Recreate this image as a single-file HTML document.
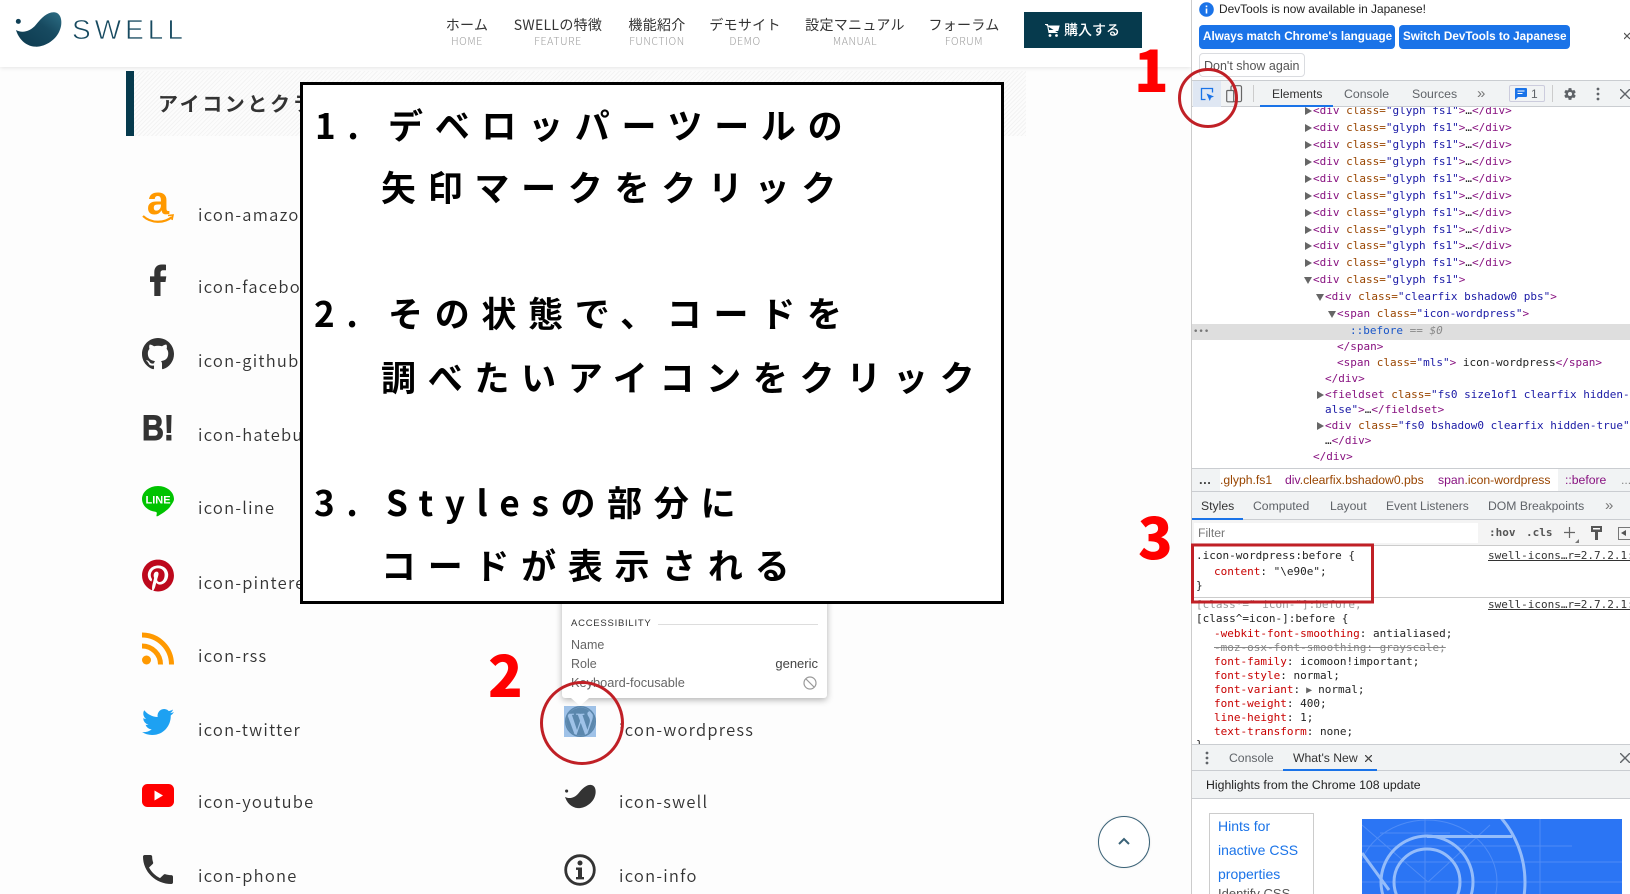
<!DOCTYPE html>
<html lang="ja"><head><meta charset="utf-8"><title>SWELL</title>
<style>
html,body{margin:0;padding:0;width:1630px;height:894px;overflow:hidden;background:#fdfdfd}
body{position:relative;font-family:"Liberation Sans","Noto Sans CJK JP",sans-serif;color:#333}
.a{position:absolute}
.t{position:absolute;white-space:nowrap;line-height:16px}
.j{font-family:"Noto Sans CJK JP","Liberation Sans",sans-serif}
.n1{position:absolute;white-space:nowrap;transform:translateX(-50%);font-family:"Noto Sans CJK JP",sans-serif;font-size:14px;line-height:16px;top:17px;color:#333;font-weight:400;letter-spacing:.3px}
.n2{position:absolute;white-space:nowrap;transform:translateX(-50%);font-family:"Noto Sans CJK JP",sans-serif;font-size:10.5px;line-height:12px;top:36px;color:#a0a0a0;letter-spacing:.6px;font-weight:300}
.ic{position:absolute;white-space:nowrap;font-family:"Noto Sans CJK JP",sans-serif;font-size:16.5px;line-height:24px;letter-spacing:1.25px;color:#333;font-weight:350}
.big{position:absolute;white-space:nowrap;font-family:"Noto Sans CJK JP",sans-serif;font-weight:700;font-size:35px;letter-spacing:11.7px;line-height:50px;color:#000}
.red{position:absolute;font-family:"Noto Sans CJK JP",sans-serif;font-weight:900;font-size:57px;line-height:62px;color:#f00}
.m{position:absolute;white-space:nowrap;font-family:"DejaVu Sans Mono",monospace;font-size:11px;line-height:14px;color:#222}
.p{color:#881280}.o{color:#994500}.v{color:#1a1aa6}.r{color:#c80000}
.u{position:absolute;white-space:nowrap;font-size:12px;line-height:16px;color:#555}
.tri{position:absolute;width:0;height:0;border-left:7px solid #666;border-top:4px solid transparent;border-bottom:4px solid transparent}
.trd{position:absolute;width:0;height:0;border-top:7px solid #666;border-left:4px solid transparent;border-right:4px solid transparent}
</style></head><body>

<!-- page header -->
<div class="a" style="left:0;top:0;width:1191px;height:67px;background:#fff;box-shadow:0 1px 4px rgba(0,0,0,.1)"></div>
<svg class="a" style="left:10px;top:8px" width="50" height="48" viewBox="0 0 150 144" overflow="visible"><defs><linearGradient id="lg" x1="0" y1="1" x2="1" y2="0"><stop offset="0" stop-color="#0c394e"/><stop offset=".6" stop-color="#174a60"/><stop offset="1" stop-color="#2e6f86"/></linearGradient></defs><circle cx="25" cy="40" r="7.5" fill="#0f3f55"/><path d="M18 66C35 76 60 72 78 50C95 28 115 10 135 13C155 16 158 45 150 65C140 95 105 118 75 116C45 114 25 90 18 66Z" fill="url(#lg)"/></svg>
<div class="t" style="left:72px;top:14px;font-size:28px;line-height:32px;letter-spacing:4px;color:#174a60;-webkit-text-stroke:.7px #fff">SWELL</div>

<div class="n1" style="left:467px">ホーム</div><div class="n2" style="left:467px">HOME</div>
<div class="n1" style="left:558px">SWELLの特徴</div><div class="n2" style="left:558px">FEATURE</div>
<div class="n1" style="left:657px">機能紹介</div><div class="n2" style="left:657px">FUNCTION</div>
<div class="n1" style="left:745px">デモサイト</div><div class="n2" style="left:745px">DEMO</div>
<div class="n1" style="left:855px">設定マニュアル</div><div class="n2" style="left:855px">MANUAL</div>
<div class="n1" style="left:964px">フォーラム</div><div class="n2" style="left:964px">FORUM</div>

<div class="a" style="left:1024px;top:12px;width:118px;height:36px;background:#063a4d"></div>
<svg class="a" style="left:1045px;top:23px" width="15" height="15" viewBox="0 0 15 15"><path d="M0 1.5h2.5l1.5 8h8.500M3 3h11l-1.200 4.500H4" fill="#fff" stroke="#fff" stroke-width="1.100"/><circle cx="5" cy="12.500" r="1.400" fill="#fff"/><circle cx="11.500" cy="12.500" r="1.400" fill="#fff"/></svg>
<div class="t j" style="left:1064px;top:22px;font-size:14px;color:#fff;font-weight:500">購入する</div>

<!-- section title -->
<div class="a" style="left:134px;top:71px;width:892px;height:65px;background:repeating-linear-gradient(-45deg,#f3f3f3 0,#f3f3f3 1px,#fcfcfc 1px,#fcfcfc 3px)"></div>
<div class="a" style="left:126px;top:71px;width:8px;height:65px;background:#063a4d"></div>
<div class="t j" style="left:158px;top:90px;font-size:20px;line-height:26px;font-weight:700;letter-spacing:2.6px;color:#333">アイコンとクラス</div>

<!-- icons left -->
<svg class="a" style="left:142px;top:192px" width="32" height="32" viewBox="0 0 32 32"><text x="16" y="22" text-anchor="middle" font-family="Liberation Sans" font-weight="700" font-size="40" fill="#f90">a</text><path d="M1 24C9 31.500 22 31.500 30 25" fill="none" stroke="#f90" stroke-width="2.200"/><path d="M26 23.500l5-.5-1 5" fill="none" stroke="#f90" stroke-width="1.600"/></svg>
<div class="ic" style="left:198px;top:202px">icon-amazon</div>

<svg class="a" style="left:142px;top:264px" width="32" height="32" viewBox="0 0 32 32"><path d="M18.500 32V18h5l.8-5.600h-5.800V9c0-1.600.5-2.800 2.900-2.800H24V.7C23.400.6 21.700.5 19.800.5 15.300.5 12.300 3.200 12.300 8.200v4.200H8V18h4.300v14z" fill="#333"/></svg>
<div class="ic" style="left:198px;top:274px">icon-facebook</div>

<svg class="a" style="left:142px;top:338px" width="32" height="32" viewBox="0 0 16 16"><path fill="#333" d="M8 0C3.580 0 0 3.580 0 8c0 3.540 2.290 6.530 5.470 7.590.4.070.55-.17.55-.38 0-.19-.01-.82-.01-1.490-2.010.37-2.530-.49-2.690-.94-.09-.23-.48-.94-.82-1.130-.28-.15-.68-.52-.01-.53.63-.01 1.080.58 1.230.82.72 1.210 1.870.87 2.330.66.07-.52.28-.87.51-1.070-1.780-.2-3.640-.89-3.640-3.950 0-.87.31-1.590.82-2.150-.08-.2-.36-1.020.08-2.120 0 0 .67-.21 2.200.82.64-.18 1.320-.27 2-.27.68 0 1.360.09 2 .27 1.530-1.040 2.200-.82 2.200-.82.44 1.100.16 1.920.08 2.120.51.56.82 1.270.82 2.150 0 3.070-1.870 3.750-3.650 3.950.29.25.54.73.54 1.480 0 1.070-.01 1.930-.01 2.200 0 .21.15.46.55.38A8.013 8.013 0 0016 8c0-4.420-3.580-8-8-8z"/></svg>
<div class="ic" style="left:198px;top:348px">icon-github</div>

<svg class="a" style="left:142px;top:414px" width="32" height="30"><text x="0" y="26" font-family="Liberation Sans" font-weight="700" font-size="35" fill="#333" stroke="#333" stroke-width="1" textLength="32" lengthAdjust="spacingAndGlyphs">B!</text></svg>
<div class="ic" style="left:198px;top:422px">icon-hatebu</div>

<svg class="a" style="left:142px;top:486px" width="32" height="32" viewBox="0 0 32 32"><path d="M16 0C7.200 0 0 5.800 0 13c0 6.400 5.700 11.800 13.300 12.800.5.100 1.200.3 1.400.8.200.4.100 1 0 1.400l-.2 1.300c-.1.4-.3 1.500 1.300.8s8.700-5.100 11.900-8.800C29.800 18 32 15.600 32 13 32 5.800 24.800 0 16 0z" fill="#00c300"/><text x="16" y="17.500" text-anchor="middle" font-family="Liberation Sans" font-weight="700" font-size="11" fill="#fff">LINE</text></svg>
<div class="ic" style="left:198px;top:495px">icon-line</div>

<svg class="a" style="left:142px;top:559px" width="32" height="33" viewBox="0 0 24 24"><path fill="#bd081c" d="M12.017 0C5.396 0 .029 5.367.029 11.987c0 5.079 3.158 9.417 7.618 11.162-.105-.949-.199-2.403.041-3.439.219-.937 1.406-5.957 1.406-5.957s-.359-.72-.359-1.781c0-1.663.967-2.911 2.168-2.911 1.024 0 1.518.769 1.518 1.688 0 1.029-.653 2.567-.992 3.992-.285 1.193.6 2.165 1.775 2.165 2.128 0 3.768-2.245 3.768-5.487 0-2.861-2.063-4.869-5.008-4.869-3.41 0-5.409 2.562-5.409 5.199 0 1.033.394 2.143.889 2.741.099.12.112.225.085.345-.09.375-.293 1.199-.334 1.363-.053.225-.172.271-.401.165-1.495-.69-2.433-2.878-2.433-4.646 0-3.776 2.748-7.252 7.920-7.252 4.158 0 7.392 2.967 7.392 6.923 0 4.135-2.607 7.462-6.233 7.462-1.214 0-2.354-.629-2.758-1.379l-.749 2.848c-.269 1.045-1.004 2.352-1.498 3.146 1.123.345 2.306.535 3.550.535 6.607 0 11.985-5.365 11.985-11.987C23.970 5.390 18.592.026 11.985.026L12.017 0z"/></svg>
<div class="ic" style="left:198px;top:570px">icon-pinterest</div>

<svg class="a" style="left:142px;top:632px" width="32" height="33" viewBox="0 0 32 32"><circle cx="4.500" cy="27.500" r="4.500" fill="#f90"/><path d="M0 13.500A18.500 18.500 0 0 1 18.500 32" fill="none" stroke="#f90" stroke-width="5"/><path d="M0 2.500A29.500 29.500 0 0 1 29.500 32" fill="none" stroke="#f90" stroke-width="5"/></svg>
<div class="ic" style="left:198px;top:643px">icon-rss</div>

<svg class="a" style="left:142px;top:708px" width="32" height="28" viewBox="0 1.500 24 21" preserveAspectRatio="none"><path fill="#1da1f2" d="M23.953 4.570a10 10 0 01-2.825.775 4.958 4.958 0 002.163-2.723c-.951.555-2.005.959-3.127 1.184a4.920 4.920 0 00-8.384 4.482C7.690 8.095 4.067 6.130 1.640 3.162a4.822 4.822 0 00-.666 2.475c0 1.710.870 3.213 2.188 4.096a4.904 4.904 0 01-2.228-.616v.06a4.923 4.923 0 003.946 4.827 4.996 4.996 0 01-2.212.085 4.936 4.936 0 004.604 3.417 9.867 9.867 0 01-6.102 2.105c-.39 0-.779-.023-1.170-.067a13.995 13.995 0 007.557 2.209c9.053 0 13.998-7.496 13.998-13.985 0-.21 0-.42-.015-.63A9.935 9.935 0 0024 4.590z"/></svg>
<div class="ic" style="left:198px;top:717px">icon-twitter</div>

<svg class="a" style="left:142px;top:784px" width="32" height="23" viewBox="0 0 32 23"><rect width="32" height="23" rx="5.500" fill="#f00"/><path d="M12.500 6.500l8.500 5-8.500 5z" fill="#fff"/></svg>
<div class="ic" style="left:198px;top:789px">icon-youtube</div>

<svg class="a" style="left:143px;top:855px" width="30" height="29" viewBox="3 3 18 18" preserveAspectRatio="none"><path fill="#333" d="M6.620 10.790c1.440 2.830 3.760 5.140 6.590 6.590l2.200-2.200c.27-.27.67-.36 1.020-.24 1.120.37 2.330.57 3.570.57.55 0 1 .45 1 1V20c0 .55-.45 1-1 1-9.390 0-17-7.610-17-17 0-.55.45-1 1-1h3.500c.55 0 1 .45 1 1 0 1.250.2 2.450.57 3.570.11.35.03.74-.25 1.020l-2.200 2.200z"/></svg>
<div class="ic" style="left:198px;top:863px">icon-phone</div>

<!-- icons right -->
<div class="a" style="left:564px;top:706px;width:32px;height:31px;background:#9fc2e8"></div>
<svg class="a" style="left:564.500px;top:706px" width="31" height="31" viewBox="0 0 24 24"><circle cx="12" cy="12" r="11.400" fill="none" stroke="#5b87ad" stroke-width="1.200"/><path fill="#5b87ad" d="M21.469 6.825c.84 1.537 1.318 3.300 1.318 5.175 0 3.979-2.156 7.456-5.363 9.325l3.295-9.527c.615-1.540.82-2.771.82-3.864 0-.405-.026-.78-.07-1.110zM13.488 6.930c.647-.03 1.232-.105 1.232-.105.582-.075.514-.93-.067-.899 0 0-1.755.135-2.880.135-1.064 0-2.850-.15-2.850-.15-.585-.03-.661.855-.075.885 0 0 .54.061 1.125.09l1.680 4.605-2.370 7.080L5.354 6.900c.649-.03 1.234-.1 1.234-.1.585-.075.516-.93-.065-.896 0 0-1.746.138-2.874.138-.2 0-.438-.008-.69-.015C4.911 3.150 8.235 1.215 12 1.215c2.809 0 5.365 1.072 7.286 2.833-.046-.003-.091-.009-.141-.009-1.060 0-1.812.923-1.812 1.914 0 .89.513 1.643 1.060 2.531.411.72.89 1.643.89 2.977 0 .915-.354 1.994-.821 3.479l-1.075 3.585-3.900-11.610zM12 22.784c-1.059 0-2.081-.153-3.048-.437l3.237-9.406 3.315 9.087c.024.053.05.101.078.149-1.120.393-2.325.609-3.582.609zM1.211 12c0-1.564.336-3.050.935-4.390L7.290 21.709C3.694 19.960 1.212 16.271 1.211 12z"/></svg>
<div class="ic" style="left:619px;top:717px">icon-wordpress</div>

<svg class="a" style="left:561px;top:782px" width="36" height="27.500" viewBox="0 0 160 122"><circle cx="25" cy="40" r="7" fill="#333"/><path d="M18 66C35 76 60 72 78 50C95 28 115 10 135 13C155 16 158 45 150 65C140 95 105 118 75 116C45 114 25 90 18 66Z" fill="#333"/></svg>
<div class="ic" style="left:619px;top:789px">icon-swell</div>

<svg class="a" style="left:564px;top:854px" width="32" height="32" viewBox="0 0 32 32"><circle cx="16" cy="16" r="14.300" fill="none" stroke="#333" stroke-width="2.800"/><circle cx="16" cy="9" r="2.500" fill="#333"/><path d="M12 13.500h6v9.500h2v2.400h-8V23h2v-7.100h-2z" fill="#333"/></svg>
<div class="ic" style="left:619px;top:863px">icon-info</div>

<!-- top button -->
<div class="a" style="left:1098px;top:816px;width:50px;height:50px;border:1px solid #3a6277;border-radius:50%;background:#fff;box-shadow:0 0 2px rgba(0,0,0,.1)"></div>
<svg class="a" style="left:1117px;top:836px" width="14" height="10" viewBox="0 0 14 10"><path d="M2 8l5-5 5 5" fill="none" stroke="#3a6277" stroke-width="2"/></svg>

<!-- tooltip -->
<div class="a" style="left:562px;top:590px;width:265px;height:108px;background:#fff;border-radius:3px;box-shadow:0 2px 7px rgba(0,0,0,.3)"></div>
<div class="a" style="left:571px;top:698px;width:0;height:0;border-left:9px solid transparent;border-right:9px solid transparent;border-top:8px solid #fff"></div>
<div class="u" style="left:571px;top:616px;font-size:9.500px;font-weight:400;color:#333;letter-spacing:.75px">ACCESSIBILITY</div>
<div class="a" style="left:658px;top:624px;width:160px;height:1px;background:#ddd"></div>
<div class="u" style="left:571px;top:637px;font-size:12.500px;color:#666">Name</div>
<div class="u" style="left:571px;top:656px;font-size:12.500px;color:#666">Role</div>
<div class="u" style="right:812px;top:656px;font-size:13px;color:#444">generic</div>
<div class="u" style="left:571px;top:675px;font-size:12.800px;color:#666">Keyboard-focusable</div>
<svg class="a" style="left:803px;top:676px" width="14" height="14" viewBox="0 0 14 14"><circle cx="7" cy="7" r="6" fill="none" stroke="#999" stroke-width="1.200"/><path d="M3 3l8 8" stroke="#999" stroke-width="1.200"/></svg>

<!-- big overlay box -->
<div class="a" style="left:300px;top:82px;width:698px;height:516px;background:#fff;border:3.500px solid #000"></div>
<div class="big" style="left:315px;top:100px">1.</div>
<div class="big" style="left:388px;top:100px">デベロッパーツールの</div>
<div class="big" style="left:381px;top:162px">矢印マークをクリック</div>
<div class="big" style="left:314px;top:288px">2.</div>
<div class="big" style="left:388px;top:288px">その状態で、コードを</div>
<div class="big" style="left:381px;top:352px">調べたいアイコンをクリック</div>
<div class="big" style="left:314px;top:477px">3.</div>
<div class="big" style="left:386px;top:477px">Stylesの部分に</div>
<div class="big" style="left:381px;top:540px">コードが表示される</div>

<!-- devtools -->
<div class="a" style="left:1191px;top:0;width:439px;height:894px;background:#fff;border-left:1px solid #ccc;box-sizing:border-box"></div>

<svg class="a" style="left:1199px;top:2px" width="15" height="15" viewBox="0 0 15 15"><circle cx="7.500" cy="7.500" r="7.300" fill="#1a73e8"/><rect x="6.700" y="6.500" width="1.600" height="5" fill="#fff"/><rect x="6.700" y="3.500" width="1.600" height="1.700" fill="#fff"/></svg>
<div class="u" style="left:1219px;top:1px;font-size:11.900px;color:#222">DevTools is now available in Japanese!</div>
<div class="a" style="left:1199px;top:25px;width:196px;height:24px;background:#1a73e8;border-radius:4px"></div>
<div class="u" style="left:1203px;top:29px;font-size:11.700px;font-weight:700;color:#fff">Always match Chrome's language</div>
<div class="a" style="left:1399px;top:25px;width:171px;height:24px;background:#1a73e8;border-radius:4px"></div>
<div class="u" style="left:1403px;top:29px;font-size:11.700px;font-weight:700;color:#fff">Switch DevTools to Japanese</div>
<div class="a" style="left:1199px;top:53px;width:106px;height:24px;box-sizing:border-box;border:1px solid #dadce0;border-radius:4px"></div>
<div class="u" style="left:1204px;top:58px;font-size:12.500px;font-weight:400;color:#555">Don't show again</div>
<svg class="a" style="left:1624px;top:32px" width="6" height="9" viewBox="0 0 6 9"><path d="M0 1l6 6" stroke="#555" stroke-width="1.200"/><path d="M6 1l-6 6" stroke="#555" stroke-width="1.200"/></svg>

<!-- main toolbar -->
<div class="a" style="left:1192px;top:80px;width:438px;height:27px;background:#f1f3f4;border-top:1px solid #cacdd1;border-bottom:1px solid #cacdd1;box-sizing:border-box"></div>
<div class="a" style="left:1193px;top:81px;width:28px;height:26px;background:#dfe7f3"></div>
<svg class="a" style="left:1200px;top:87px" width="15" height="15" viewBox="0 0 15 15"><path d="M5.500 12.500H1.500V1.500h11v4" fill="none" stroke="#1a73e8" stroke-width="1.300"/><path d="M6.500 6.500l7.500 3-3 1.200L9.800 14z" fill="#1a73e8"/></svg>
<svg class="a" style="left:1226px;top:85px" width="17" height="18" viewBox="0 0 17 18"><rect x="5" y=".7" width="10.500" height="16" rx="1.500" fill="none" stroke="#666" stroke-width="1.200"/><rect x=".7" y="5.500" width="7" height="11.300" rx="1" fill="#f1f3f4" stroke="#666" stroke-width="1.200"/></svg>
<div class="a" style="left:1253px;top:85px;width:1px;height:17px;background:#ccc"></div>
<div class="u" style="left:1272px;top:86px;font-size:12.100px;color:#333">Elements</div>
<div class="a" style="left:1260px;top:105px;width:73px;height:2px;background:#1a73e8"></div>
<div class="u" style="left:1344px;top:86px;font-size:12.300px;color:#5f6368">Console</div>
<div class="u" style="left:1412px;top:86px;font-size:12.300px;color:#5f6368">Sources</div>
<div class="u" style="left:1477px;top:86px;font-size:15px;color:#777">»</div>
<div class="a" style="left:1509px;top:85px;width:36px;height:17px;box-sizing:border-box;border:1px solid #ccd;border-radius:2px"></div>
<svg class="a" style="left:1515px;top:88px" width="12" height="12" viewBox="0 0 12 12"><path d="M0 1a1 1 0 0 1 1-1h10a1 1 0 0 1 1 1v7a1 1 0 0 1-1 1H3l-3 3z" fill="#1a73e8"/><path d="M2.500 3h7M2.500 5.500h5" stroke="#fff"/></svg>
<div class="u" style="left:1531px;top:86px;font-size:12px;color:#5f6368">1</div>
<div class="a" style="left:1552px;top:85px;width:1px;height:17px;background:#ccc"></div>
<svg class="a" style="left:1563px;top:87px" width="14" height="14" viewBox="0 0 24 24"><path fill="#5f6368" d="M19.430 12.980c.04-.32.07-.64.07-.98s-.03-.66-.07-.98l2.110-1.650c.19-.15.24-.42.12-.64l-2-3.460c-.12-.22-.39-.3-.61-.22l-2.490 1c-.52-.4-1.080-.73-1.690-.98l-.38-2.650A.488.488 0 0014 2h-4c-.25 0-.46.18-.49.42l-.38 2.650c-.61.25-1.170.59-1.690.98l-2.490-1c-.23-.09-.49 0-.61.22l-2 3.460c-.13.22-.07.49.12.64l2.110 1.650c-.04.32-.07.65-.07.98s.03.66.07.98l-2.110 1.650c-.19.15-.24.42-.12.64l2 3.460c.12.22.39.3.61.22l2.490-1c.52.4 1.080.73 1.690.98l.38 2.650c.03.24.24.42.49.42h4c.25 0 .46-.18.49-.42l.38-2.650c.61-.25 1.170-.59 1.690-.98l2.490 1c.23.09.49 0 .61-.22l2-3.460c.12-.22.07-.49-.12-.64l-2.110-1.650zM12 15.500A3.500 3.500 0 1112 8.500a3.500 3.500 0 010 7z"/></svg>
<svg class="a" style="left:1596px;top:87px" width="4" height="14" viewBox="0 0 4 14"><circle cx="2" cy="2" r="1.400" fill="#5f6368"/><circle cx="2" cy="7" r="1.400" fill="#5f6368"/><circle cx="2" cy="12" r="1.400" fill="#5f6368"/></svg>
<svg class="a" style="left:1620px;top:89px" width="10" height="10" viewBox="0 0 10 10"><path d="M0 0l10 10M10 0L0 10" stroke="#5f6368" stroke-width="1.400"/></svg>

<!-- element tree -->
<div class="tri" style="left:1305px;top:107px"></div><div class="m" style="left:1313px;top:104px;clip-path:inset(3px 0 0 0)"><span class="p">&lt;div</span> <span class="o">class=</span><span class="v">"glyph fs1"</span><span class="p">&gt;</span>…<span class="p">&lt;/div&gt;</span></div>
<div class="tri" style="left:1305px;top:124px"></div><div class="m" style="left:1313px;top:121px"><span class="p">&lt;div</span> <span class="o">class=</span><span class="v">"glyph fs1"</span><span class="p">&gt;</span>…<span class="p">&lt;/div&gt;</span></div>
<div class="tri" style="left:1305px;top:141px"></div><div class="m" style="left:1313px;top:138px"><span class="p">&lt;div</span> <span class="o">class=</span><span class="v">"glyph fs1"</span><span class="p">&gt;</span>…<span class="p">&lt;/div&gt;</span></div>
<div class="tri" style="left:1305px;top:158px"></div><div class="m" style="left:1313px;top:155px"><span class="p">&lt;div</span> <span class="o">class=</span><span class="v">"glyph fs1"</span><span class="p">&gt;</span>…<span class="p">&lt;/div&gt;</span></div>
<div class="tri" style="left:1305px;top:175px"></div><div class="m" style="left:1313px;top:172px"><span class="p">&lt;div</span> <span class="o">class=</span><span class="v">"glyph fs1"</span><span class="p">&gt;</span>…<span class="p">&lt;/div&gt;</span></div>
<div class="tri" style="left:1305px;top:192px"></div><div class="m" style="left:1313px;top:189px"><span class="p">&lt;div</span> <span class="o">class=</span><span class="v">"glyph fs1"</span><span class="p">&gt;</span>…<span class="p">&lt;/div&gt;</span></div>
<div class="tri" style="left:1305px;top:209px"></div><div class="m" style="left:1313px;top:206px"><span class="p">&lt;div</span> <span class="o">class=</span><span class="v">"glyph fs1"</span><span class="p">&gt;</span>…<span class="p">&lt;/div&gt;</span></div>
<div class="tri" style="left:1305px;top:226px"></div><div class="m" style="left:1313px;top:223px"><span class="p">&lt;div</span> <span class="o">class=</span><span class="v">"glyph fs1"</span><span class="p">&gt;</span>…<span class="p">&lt;/div&gt;</span></div>
<div class="tri" style="left:1305px;top:242px"></div><div class="m" style="left:1313px;top:239px"><span class="p">&lt;div</span> <span class="o">class=</span><span class="v">"glyph fs1"</span><span class="p">&gt;</span>…<span class="p">&lt;/div&gt;</span></div>
<div class="tri" style="left:1305px;top:259px"></div><div class="m" style="left:1313px;top:256px"><span class="p">&lt;div</span> <span class="o">class=</span><span class="v">"glyph fs1"</span><span class="p">&gt;</span>…<span class="p">&lt;/div&gt;</span></div>
<div class="trd" style="left:1304px;top:277px"></div><div class="m" style="left:1313px;top:273px"><span class="p">&lt;div</span> <span class="o">class=</span><span class="v">"glyph fs1"</span><span class="p">&gt;</span></div>
<div class="trd" style="left:1316px;top:294px"></div><div class="m" style="left:1325px;top:290px"><span class="p">&lt;div</span> <span class="o">class=</span><span class="v">"clearfix bshadow0 pbs"</span><span class="p">&gt;</span></div>
<div class="trd" style="left:1328px;top:311px"></div><div class="m" style="left:1337px;top:307px"><span class="p">&lt;span</span> <span class="o">class=</span><span class="v">"icon-wordpress"</span><span class="p">&gt;</span></div>
<div class="a" style="left:1192px;top:324px;width:438px;height:16px;background:#dedede"></div>
<div class="m" style="left:1193px;top:325px;font-size:9px;color:#777">•••</div>
<div class="m" style="left:1350px;top:324px"><span style="color:#1a56c8">::before</span> <span style="color:#888">==</span> <i style="color:#888">$0</i></div>
<div class="m" style="left:1337px;top:340px"><span class="p">&lt;/span&gt;</span></div>
<div class="m" style="left:1337px;top:356px"><span class="p">&lt;span</span> <span class="o">class=</span><span class="v">"mls"</span><span class="p">&gt;</span> icon-wordpress<span class="p">&lt;/span&gt;</span></div>
<div class="m" style="left:1325px;top:372px"><span class="p">&lt;/div&gt;</span></div>
<div class="tri" style="left:1317px;top:391px"></div><div class="m" style="left:1325px;top:388px"><span class="p">&lt;fieldset</span> <span class="o">class=</span><span class="v">"fs0 size1of1 clearfix hidden-</span></div>
<div class="m" style="left:1325px;top:403px"><span class="v">alse"</span><span class="p">&gt;</span>…<span class="p">&lt;/fieldset&gt;</span></div>
<div class="tri" style="left:1317px;top:422px"></div><div class="m" style="left:1325px;top:419px"><span class="p">&lt;div</span> <span class="o">class=</span><span class="v">"fs0 bshadow0 clearfix hidden-true"</span></div>
<div class="m" style="left:1325px;top:434px">…<span class="p">&lt;/div&gt;</span></div>
<div class="m" style="left:1313px;top:450px"><span class="p">&lt;/div&gt;</span></div>

<!-- breadcrumb -->
<div class="a" style="left:1192px;top:468px;width:438px;height:24px;background:#fff;border-top:1px solid #cacdd1;border-bottom:1px solid #cacdd1;box-sizing:border-box"></div>
<div class="a" style="left:1192px;top:469px;width:28px;height:22px;background:#f1f3f4"></div>
<div class="a" style="left:1613px;top:469px;width:17px;height:22px;background:#f1f3f4"></div>
<div class="a" style="left:1558px;top:469px;width:55px;height:22px;background:#f1f3f4"></div>
<div class="u" style="left:1199px;top:472px;font-size:13px;font-weight:700;color:#444;letter-spacing:.5px">...</div>
<div class="u" style="left:1220px;top:472px;font-size:12.200px;color:#994500">.glyph.fs1</div>
<div class="u" style="left:1285px;top:472px;font-size:12.200px"><span class="p">div</span><span class="o">.clearfix.bshadow0.pbs</span></div>
<div class="u" style="left:1438px;top:472px;font-size:12.200px"><span class="p">span</span><span class="o">.icon-wordpress</span></div>
<div class="u" style="left:1565px;top:472px;font-size:12.200px;color:#881280">::before</div>
<div class="u" style="left:1621px;top:472px;font-size:12.200px;color:#888">...</div>

<!-- styles tabs -->
<div class="a" style="left:1192px;top:492px;width:438px;height:28px;background:#f1f3f4;border-bottom:1px solid #cacdd1;box-sizing:border-box"></div>
<div class="u" style="left:1201px;top:498px;font-size:12.200px;color:#333">Styles</div>
<div class="u" style="left:1253px;top:498px;font-size:12.200px;color:#5f6368">Computed</div>
<div class="u" style="left:1330px;top:498px;font-size:12.200px;color:#5f6368">Layout</div>
<div class="u" style="left:1386px;top:498px;font-size:12px;color:#5f6368">Event Listeners</div>
<div class="u" style="left:1488px;top:498px;font-size:12.200px;color:#5f6368">DOM Breakpoints</div>
<div class="u" style="left:1605px;top:498px;font-size:15px;color:#777">»</div>
<div class="a" style="left:1192px;top:518px;width:51px;height:2px;background:#1a73e8"></div>

<!-- filter -->
<div class="a" style="left:1192px;top:520px;width:438px;height:26px;background:#f4f4f4;border-bottom:1px solid #ccc;box-sizing:border-box"></div>
<div class="a" style="left:1194px;top:523px;width:284px;height:20px;background:#fff"></div>
<div class="u" style="left:1198px;top:525px;font-size:12.200px;color:#777">Filter</div>
<div class="m" style="left:1489px;top:526px;font-weight:700;color:#555">:hov</div>
<div class="m" style="left:1526px;top:526px;font-weight:700;color:#555">.cls</div>
<svg class="a" style="left:1564px;top:527px" width="16" height="17" viewBox="0 0 16 17"><path d="M5.500 0v11M0 5.500h11" stroke="#666" stroke-width="1.200"/><path d="M15 12v4h-4z" fill="#777"/></svg>
<svg class="a" style="left:1590px;top:525px" width="13" height="16" viewBox="0 0 13 16"><rect x="1" y="1" width="11" height="6" fill="#555"/><rect x="5" y="7" width="3" height="8" fill="#555"/><rect x="3" y="3" width="7" height="1.500" fill="#fff"/></svg>
<div class="a" style="left:1618px;top:527px;width:12px;height:13px;box-sizing:border-box;border:1px solid #777;border-right:0"></div>
<div class="a" style="left:1621px;top:530px;width:0;height:0;border-right:5px solid #555;border-top:3.500px solid transparent;border-bottom:3.500px solid transparent"></div>

<!-- rules -->
<div class="m" style="left:1196px;top:549px">.icon-wordpress:before {</div>
<div class="m" style="left:1214px;top:565px"><span class="r">content</span>: "\e90e";</div>
<div class="m" style="left:1196px;top:579px">}</div>
<div class="m" style="left:1488px;top:549px;text-decoration:underline;color:#333">swell-icons…r=2.7.2.1:</div>
<div class="a" style="left:1192px;top:597px;width:438px;height:1px;background:#ccc"></div>
<div class="m" style="left:1196px;top:598px;color:#999">[class*=" icon-"]:before,</div>
<div class="m" style="left:1488px;top:598px;text-decoration:underline;color:#333">swell-icons…r=2.7.2.1:</div>
<div class="m" style="left:1196px;top:612px">[class^=icon-]:before {</div>
<div class="m" style="left:1214px;top:627px"><span class="r">-webkit-font-smoothing</span>: antialiased;</div>
<div class="m" style="left:1214px;top:641px;color:#888;text-decoration:line-through">-moz-osx-font-smoothing: grayscale;</div>
<div class="m" style="left:1214px;top:655px"><span class="r">font-family</span>: icomoon!important;</div>
<div class="m" style="left:1214px;top:669px"><span class="r">font-style</span>: normal;</div>
<div class="m" style="left:1214px;top:683px"><span class="r">font-variant</span>:<span style="font-size:10px;color:#666"> ▶ </span>normal;</div>
<div class="m" style="left:1214px;top:697px"><span class="r">font-weight</span>: 400;</div>
<div class="m" style="left:1214px;top:711px"><span class="r">line-height</span>: 1;</div>
<div class="m" style="left:1214px;top:725px"><span class="r">text-transform</span>: none;</div>
<div class="m" style="left:1196px;top:738px">}</div>

<!-- drawer -->
<div class="a" style="left:1192px;top:744px;width:438px;height:27px;background:#f1f3f4;border-top:1px solid #cacdd1;border-bottom:1px solid #cacdd1;box-sizing:border-box"></div>
<svg class="a" style="left:1205px;top:751px" width="4" height="14" viewBox="0 0 4 14"><circle cx="2" cy="2" r="1.400" fill="#5f6368"/><circle cx="2" cy="7" r="1.400" fill="#5f6368"/><circle cx="2" cy="12" r="1.400" fill="#5f6368"/></svg>
<div class="u" style="left:1229px;top:750px;font-size:12.200px;color:#5f6368">Console</div>
<div class="u" style="left:1293px;top:750px;font-size:12.200px;color:#333">What's New</div>
<svg class="a" style="left:1365px;top:755px" width="7" height="7" viewBox="0 0 7 7"><path d="M0 0l7 7M7 0L0 7" stroke="#444" stroke-width="1.300"/></svg>
<div class="a" style="left:1283px;top:769px;width:94px;height:2px;background:#1a73e8"></div>
<svg class="a" style="left:1620px;top:753px" width="10" height="10" viewBox="0 0 10 10"><path d="M0 0l10 10M10 0L0 10" stroke="#5f6368" stroke-width="1.400"/></svg>
<div class="a" style="left:1192px;top:771px;width:438px;height:28px;background:#f1f3f4;border-bottom:1px solid #cacdd1;box-sizing:border-box"></div>
<div class="u" style="left:1206px;top:777px;font-size:12.300px;color:#222">Highlights from the Chrome 108 update</div>

<div class="a" style="left:1209px;top:813px;width:105px;height:81px;box-sizing:border-box;border:1px solid #ccc;border-bottom:0"></div>
<div class="u" style="left:1218px;top:818px;font-size:14px;color:#1a73e8">Hints for</div>
<div class="u" style="left:1218px;top:842px;font-size:14px;color:#1a73e8">inactive CSS</div>
<div class="u" style="left:1218px;top:866px;font-size:14px;color:#1a73e8">properties</div>
<div class="u" style="left:1218px;top:884px;font-size:13px;color:#555;height:10px;overflow:hidden;line-height:19px">Identify CSS</div>

<svg class="a" style="left:1362px;top:819px" width="260" height="75" viewBox="1362 819 260 75"><rect x="1362" y="819" width="260" height="75" fill="#2b75f4"/><g fill="none" stroke="#4f8cf6" stroke-width="1"><path d="M1362 825l66 57M1490 825l-62 57M1425 819v75M1362 882h260M1362 846h210M1362 862h260M1540 819v75M1380 833h70"/><ellipse cx="1427" cy="882" rx="70" ry="62"/></g><g fill="none" stroke="#94bcfa" stroke-width="3"><circle cx="1427" cy="882" r="33"/><circle cx="1427" cy="882" r="46"/><circle cx="1427" cy="882" r="98"/><path d="M1427 836.500h85M1362 853l27 37"/></g></svg>

<!-- annotations -->
<svg class="a" style="left:0;top:0;pointer-events:none" width="1630" height="894" viewBox="0 0 1630 894"><g fill="none" stroke="#c02026" stroke-width="3"><circle cx="1208" cy="98" r="28.500"/><circle cx="582" cy="723" r="40.500"/><rect x="1192.500" y="545" width="180" height="57"/></g></svg>
<div class="red" style="left:1134px;top:37px">1</div>
<div class="red" style="left:488px;top:642px">2</div>
<div class="red" style="left:1138px;top:504px">3</div>

</body></html>
